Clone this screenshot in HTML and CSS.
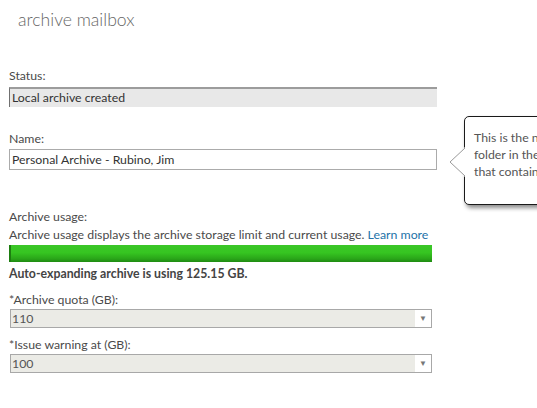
FILE: index.html
```html
<!DOCTYPE html>
<html lang="en">
<head>
    <meta charset="UTF-8">
    <title>archive mailbox</title>
    <link rel="stylesheet" href="styles.css">
</head>
<body>

    <div class="page">
        <div class="title">archive mailbox</div>

        <div class="label status_label">Status:</div>
        <div class="status_box">Local archive created</div>

        <div class="label name_label">Name:</div>
        <div class="name_box">Personal Archive - Rubino, Jim</div>

        <div class="label usage_label">Archive usage:</div>
        <div class="label usage_desc">Archive usage displays the archive storage limit and current usage. <a class="link" href="#">Learn more</a></div>
        <div class="usage_bar"></div>
        <div class="usage_text">Auto-expanding archive is using 125.15 GB.</div>

        <div class="label quota_label">*Archive quota (GB):</div>
        <div class="select">
            <span class="select_value">110</span>
            <span class="select_arrow">&#9660;</span>
        </div>

        <div class="label warn_label">*Issue warning at (GB):</div>
        <div class="select">
            <span class="select_value">100</span>
            <span class="select_arrow">&#9660;</span>
        </div>
    </div>

    <div class="tip_clip">
        <div class="tip">
            <svg class="tip_arrow" width="17" height="30" viewBox="0 0 17 30">
                <polygon points="16,0 1,15 16,30" fill="#fff"/>
                <polyline points="16,1 1,15 16,29" fill="none" stroke="#9a9a9a" stroke-width="1"/>
            </svg>
            <div class="tip_text">This is the name of the archive<br>folder in the folder list<br>that contains the archived items.</div>
        </div>
    </div>

</body>
</html>
```

FILE: styles.css
```css
*{
    box-sizing: border-box;
}
body{
    margin: 0;
    background-color: #fff;
    font-family: Lato, 'Open Sans', sans-serif;
    font-size: 12.3px;
    color: #4a4a4a;
    overflow: hidden;
    height: 408px;
    position: relative;
}
.page{
    width: 440px;
    padding: 8px 0 0 9px;
}
.title{
    /* 標題 */
    padding-left: 9px;
    font-size: 17.6px;
    font-weight: 300;
    line-height: 24px;
    color: #666;
}
.label{
    line-height: 16px;
    color: #4a4a4a;
}
.status_label{
    margin-top: 36px;
}
.status_box{
    margin-top: 3px;
    width: 428px;
    height: 20px;
    line-height: 18px;
    padding-left: 2px;
    background-color: #e8e8e8;
    border-top: 2px solid #9c9c9c;
    border-left: 1px solid #707070;
    color: #333;
}
.name_label{
    margin-top: 24px;
}
.name_box{
    margin-top: 2px;
    width: 428px;
    height: 21px;
    line-height: 19px;
    padding-left: 2px;
    border: 1px solid #ababab;
    color: #333;
}
.usage_label{
    margin-top: 39px;
}
.usage_desc{
    margin-top: 2px;
    white-space: nowrap;
}
.link{
    color: #2372a8;
    text-decoration: none;
}
.usage_bar{
    margin-top: 2px;
    width: 423px;
    height: 17px;
    background: linear-gradient(to bottom, #3bc628 0%, #36c521 45%, #2aa619 80%, #1f8b12 100%);
    border-left: 2px solid #1d7d10;
}
.usage_text{
    margin-top: 4px;
    line-height: 16px;
    font-weight: 700;
    color: #444;
}
.quota_label{
    margin-top: 10px;
}
.warn_label{
    margin-top: 9px;
}
.select{
    display: flex;
    margin: 1px 0 0 1px;
    width: 422px;
    height: 19px;
    border: 1px solid #a8a8a8;
    background-color: #ebebe6;
}
.select_value{
    flex: 1;
    line-height: 17px;
    padding-left: 1px;
    color: #555;
}
.select_arrow{
    width: 16px;
    background-color: #fff;
    color: #777;
    font-size: 8px;
    line-height: 17px;
    text-align: center;
}
.tip_clip{
    /* 提示框超出畫面的部分裁掉 */
    position: absolute;
    left: 440px;
    top: 110px;
    width: 97px;
    height: 110px;
    overflow: hidden;
}
.tip{
    /* 右邊的提示框 */
    position: absolute;
    left: 24px;
    top: 6px;
    width: 220px;
    height: 89px;
    padding: 12px 0 0 9px;
    border: 1px solid #1a1a1a;
    border-radius: 5px;
    background-color: #fff;
    box-shadow: 2px 3px 4px rgba(0, 0, 0, 0.45);
}
.tip_text{
    line-height: 17px;
    color: #555;
    white-space: nowrap;
}
.tip_arrow{
    position: absolute;
    left: -16px;
    top: 30px;
}
```
